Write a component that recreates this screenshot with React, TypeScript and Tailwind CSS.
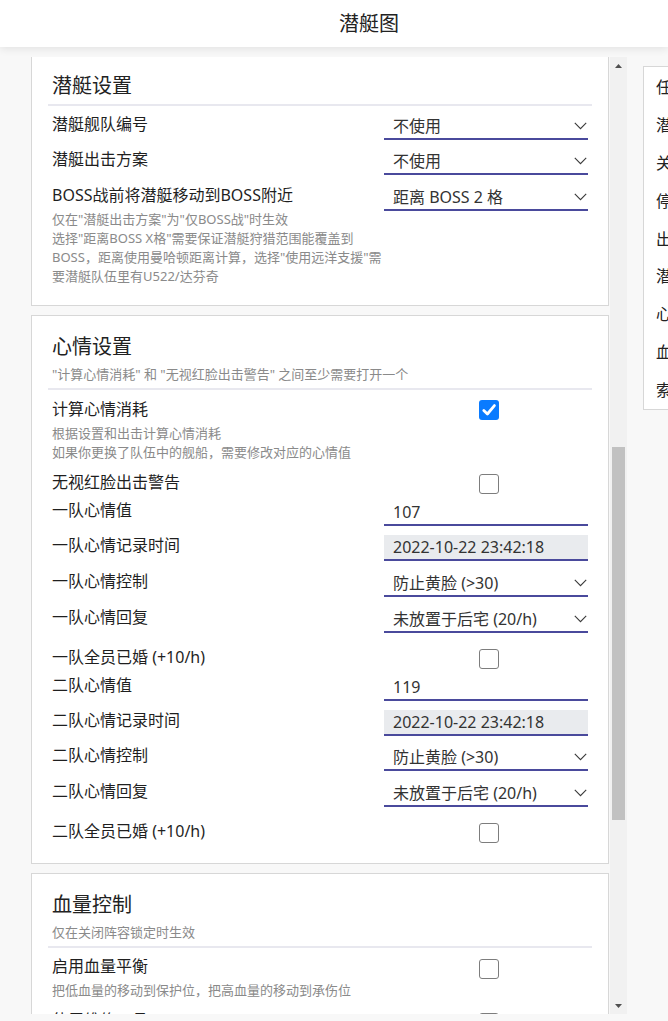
import React from "react";

function Chevron() {
  return (
    <svg width="13" height="8" viewBox="0 0 13 8" className="shrink-0">
      <path d="M0.8 0.8 L6.5 6.6 L12.2 0.8" fill="none" stroke="#3a3a3a" strokeWidth="1.1" />
    </svg>
  );
}

function Select({ value }: { value: string }) {
  return (
    <div className="h-[26px] border-b-2 border-[#4a4a9c] flex items-center justify-between pl-[9px] pr-[1px]">
      <span className="text-[16px] leading-[24px] text-[#333] whitespace-nowrap">{value}</span>
      <Chevron />
    </div>
  );
}

function Input({ value, disabled }: { value: string; disabled?: boolean }) {
  return (
    <div
      className={
        disabled
          ? "h-[26px] border-b-2 border-[#4a4a9c] bg-[#e9ebee] flex items-center pl-[9px]"
          : "h-[26px] border-b-2 border-[#4a4a9c] flex items-center pl-[9px]"
      }
    >
      <span className="text-[16px] leading-[24px] text-[#333] whitespace-nowrap">{value}</span>
    </div>
  );
}

function Checkbox({ checked }: { checked?: boolean }) {
  if (checked) {
    return (
      <div className="w-[20px] h-[20px] rounded-[3px] bg-[#0a7bff] flex items-center justify-center">
        <svg width="20" height="20" viewBox="0 0 20 20">
          <path d="M4.8 10.4 L8.4 14 L15.4 5.6" fill="none" stroke="#ffffff" strokeWidth="2.8" strokeLinecap="round" strokeLinejoin="round" />
        </svg>
      </div>
    );
  }
  return <div className="w-[20px] h-[20px] rounded-[3px] border-[1.5px] border-[#7d7d7d] bg-white" />;
}

function Help({ lines }: { lines: string[] }) {
  return (
    <div className="mt-[5px] text-[13px] leading-[19px] text-[#8a8a8a]">
      {lines.map((l, i) => (
        <div key={i} className="whitespace-nowrap">
          {l}
        </div>
      ))}
    </div>
  );
}

function Row({
  label,
  help,
  mt,
  children,
}: {
  label: string;
  help?: string[];
  mt: string;
  children: React.ReactNode;
}) {
  return (
    <div className={"flex items-start " + mt}>
      <div className="flex-1 min-w-0">
        <div className="text-[16px] leading-[20px] text-[#1f1f1f] whitespace-nowrap">{label}</div>
        {help && <Help lines={help} />}
      </div>
      <div className="w-[204px] shrink-0">{children}</div>
    </div>
  );
}

function CheckCtl({ checked, mt }: { checked?: boolean; mt: string }) {
  return (
    <div className={"pl-[95px] " + mt}>
      <Checkbox checked={checked} />
    </div>
  );
}

function Card({
  title,
  subtitle,
  pb,
  children,
}: {
  title: string;
  subtitle?: string;
  pb: string;
  children: React.ReactNode;
}) {
  return (
    <section className={"bg-white border border-[#d7d7d7] px-[16px] pt-[17px] " + pb}>
      <div className="px-[4px]">
        <h2 className="text-[20px] leading-[28px] text-[#222] font-normal">{title}</h2>
        {subtitle && (
          <p className="mt-[4.5px] text-[13px] leading-[19px] text-[#8a8a8a] whitespace-nowrap">{subtitle}</p>
        )}
      </div>
      <div className="mt-[3.5px] h-[2px] bg-[#e8e8ef]" />
      <div className="px-[4px]">{children}</div>
    </section>
  );
}

function Scrollbar() {
  return (
    <div className="w-[17px] h-full bg-[#f1f1f1] flex flex-col shrink-0">
      <div className="h-[17px] flex items-center justify-center">
        <svg width="7" height="4" viewBox="0 0 7 4">
          <polygon points="0,4 7,4 3.5,0" fill="#505050" />
        </svg>
      </div>
      <div className="flex-1 flex flex-col">
        <div className="h-[373px]" />
        <div className="h-[373px] mx-[2px] bg-[#c1c1c1]" />
      </div>
      <div className="h-[17px] flex items-center justify-center">
        <svg width="7" height="4" viewBox="0 0 7 4">
          <polygon points="0,0 7,0 3.5,4" fill="#505050" />
        </svg>
      </div>
    </div>
  );
}

const NAV = ["任务名称", "潜艇图", "关卡设置", "停止条件", "出击设置", "潜艇设置", "心情设置", "血量控制", "索敌设置"];

export default function App() {
  return (
    <div className="w-[668px] h-[1021px] overflow-hidden bg-[#f8f8f8] flex flex-col font-[family-name:'Noto_Sans','Noto_Sans_CJK_SC',sans-serif]">
      <header className="h-[47px] shrink-0 bg-white relative z-10 shadow-[0_2px_8px_rgba(0,0,0,0.09)] flex items-center justify-center pl-[70px]">
        <h1 className="text-[20px] leading-[28px] text-[#222] font-normal">潜艇图</h1>
      </header>
      <div className="flex-1 min-h-0 flex pt-[10px] pb-[7px] overflow-hidden">
        <div className="w-[627px] shrink-0 h-full flex">
          <div className="flex-1 h-full overflow-hidden pl-[31px]">
            <div className="w-[578px] -mt-[3px] flex flex-col gap-[9px]">
              <Card title="潜艇设置" pb="pb-[18.5px]">
                <Row label="潜艇舰队编号" mt="mt-[8px]">
                  <Select value="不使用" />
                </Row>
                <Row label="潜艇出击方案" mt="mt-[9.5px]">
                  <Select value="不使用" />
                </Row>
                <Row
                  label="BOSS战前将潜艇移动到BOSS附近"
                  mt="mt-[10px]"
                  help={[
                    "仅在\"潜艇出击方案\"为\"仅BOSS战\"时生效",
                    "选择\"距离BOSS X格\"需要保证潜艇狩猎范围能覆盖到",
                    "BOSS，距离使用曼哈顿距离计算，选择\"使用远洋支援\"需",
                    "要潜艇队伍里有U522/达芬奇",
                  ]}
                >
                  <Select value="距离 BOSS 2 格" />
                </Row>
              </Card>

              <Card
                title="心情设置"
                subtitle={"\"计算心情消耗\" 和 \"无视红脸出击警告\" 之间至少需要打开一个"}
                pb="pb-[20px]"
              >
                <Row
                  label="计算心情消耗"
                  mt="mt-[9.5px]"
                  help={["根据设置和出击计算心情消耗", "如果你更换了队伍中的舰船，需要修改对应的心情值"]}
                >
                  <CheckCtl checked mt="mt-[1px]" />
                </Row>
                <Row label="无视红脸出击警告" mt="mt-[9.5px]">
                  <CheckCtl mt="mt-[2.5px]" />
                </Row>
                <Row label="一队心情值" mt="mt-[6px]">
                  <Input value="107" />
                </Row>
                <Row label="一队心情记录时间" mt="mt-[9px]">
                  <Input value="2022-10-22 23:42:18" disabled />
                </Row>
                <Row label="一队心情控制" mt="mt-[9.5px]">
                  <Select value="防止黄脸 (>30)" />
                </Row>
                <Row label="一队心情回复" mt="mt-[10px]">
                  <Select value="未放置于后宅 (20/h)" />
                </Row>
                <Row label="一队全员已婚 (+10/h)" mt="mt-[14px]">
                  <CheckCtl mt="mt-[2px]" />
                </Row>
                <Row label="二队心情值" mt="mt-[6.5px]">
                  <Input value="119" />
                </Row>
                <Row label="二队心情记录时间" mt="mt-[9px]">
                  <Input value="2022-10-22 23:42:18" disabled />
                </Row>
                <Row label="二队心情控制" mt="mt-[9px]">
                  <Select value="防止黄脸 (>30)" />
                </Row>
                <Row label="二队心情回复" mt="mt-[10px]">
                  <Select value="未放置于后宅 (20/h)" />
                </Row>
                <Row label="二队全员已婚 (+10/h)" mt="mt-[13.5px]">
                  <CheckCtl mt="mt-[2px]" />
                </Row>
              </Card>

              <Card title="血量控制" subtitle="仅在关闭阵容锁定时生效" pb="pb-[20px]">
                <Row
                  label="启用血量平衡"
                  mt="mt-[8.5px]"
                  help={["把低血量的移动到保护位，把高血量的移动到承伤位"]}
                >
                  <CheckCtl mt="mt-[2.5px]" />
                </Row>
                <Row label="使用维修工具" mt="mt-[10px]">
                  <CheckCtl mt="mt-[2.5px]" />
                </Row>
              </Card>
            </div>
          </div>
          <Scrollbar />
        </div>
        <div className="ml-[16px] mt-[9px] self-start w-[200px] shrink-0 bg-white border border-[#d7d7d7] pt-[1.5px]">
          {NAV.map((t) => (
            <div key={t} className="h-[37.8px] flex items-center pl-[12px] text-[16px] text-[#222] whitespace-nowrap">
              {t}
            </div>
          ))}
        </div>
      </div>
    </div>
  );
}
